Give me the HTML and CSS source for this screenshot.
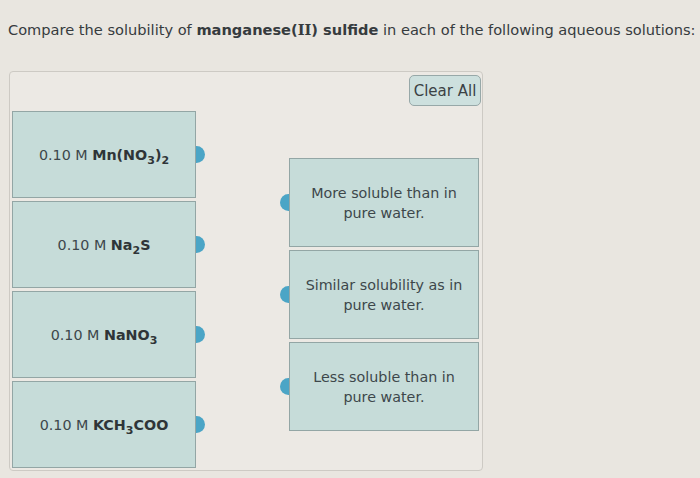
FILE: index.html
```html
<!DOCTYPE html>
<html lang="en">
<head>
    <meta charset="UTF-8">
    <meta name="viewport" content="width=device-width, initial-scale=1.0">
    <title>Solubility - Matching</title>
    <link rel="stylesheet" href="styles.css">
</head>
<body>
    <p class="question">Compare the solubility of <b>manganese(<span class="roman">II</span>) sulfide</b> in each of the following aqueous solutions:</p>

    <div class="panel">
        <div class="panel-top">
            <button class="clear-button">Clear All</button>
        </div>
        <div class="panel-body">
            <div class="column sources">
                <div class="card source">0.10 M&nbsp;<b>Mn(NO<sub>3</sub>)<sub>2</sub></b></div>
                <div class="card source">0.10 M&nbsp;<b>Na<sub>2</sub>S</b></div>
                <div class="card source">0.10 M&nbsp;<b>NaNO<sub>3</sub></b></div>
                <div class="card source">0.10 M&nbsp;<b>KCH<sub>3</sub>COO</b></div>
            </div>
            <div class="column targets">
                <div class="card target">More soluble than in<br>pure water.</div>
                <div class="card target">Similar solubility as in<br>pure water.</div>
                <div class="card target">Less soluble than in<br>pure water.</div>
            </div>
        </div>
    </div>
</body>
</html>
```

FILE: styles.css
```css
* {
    margin: 0;
    padding: 0;
    box-sizing: border-box;
}
body {
    font-family: 'DejaVu Sans', Verdana, sans-serif;
    background-color: #e9e6e0;
    color: #3b4245;
    width: 700px;
    height: 478px;
    overflow: hidden;
}
.question {
    font-size: 14.6px;
    line-height: 18px;
    margin: 21px 0 0 8px;
    color: #363b3e;
    white-space: nowrap;
}
.question .roman {
    font-family: 'DejaVu Serif', serif;
}
.panel {
    margin: 32px 0 0 9px;
    width: 474px;
    height: 400px;
    background-color: #ece9e4;
    border: 1px solid #cdcac4;
    border-radius: 4px;
    padding: 3px 1px 3px 2px;
}
.panel-top {
    display: flex;
    justify-content: flex-end;
}
.clear-button {
    font-family: inherit;
    font-size: 15px;
    color: #3b4245;
    background-color: #cde0de;
    border: 1px solid #97a8a8;
    border-radius: 5px;
    width: 72px;
    height: 31px;
}
.panel-body {
    display: flex;
    justify-content: space-between;
    padding-right: 2px;
}
.column {
    display: flex;
    flex-direction: column;
    gap: 3px;
}
.sources {
    margin-top: 5px;
}
.targets {
    margin-top: 52px;
}
.card {
    position: relative;
    display: flex;
    align-items: center;
    justify-content: center;
    text-align: center;
    background-color: #c6dcd9;
    border: 1px solid #93a6a5;
    font-size: 14.3px;
    line-height: 20px;
    color: #3d474b;
}
.card b {
    color: #2f3538;
}
.card sub {
    font-size: 11px;
    line-height: 0;
    vertical-align: -4px;
}
.source {
    width: 184px;
    height: 87px;
}
.target {
    width: 190px;
    height: 89px;
}
.source::after,
.target::before {
    content: '';
    position: absolute;
    top: 50%;
    width: 9px;
    height: 17px;
    margin-top: -9px;
    background-color: #4ba5c6;
}
.source::after {
    right: -10px;
    border-radius: 0 9px 9px 0;
}
.target::before {
    left: -10px;
    border-radius: 9px 0 0 9px;
}
```
